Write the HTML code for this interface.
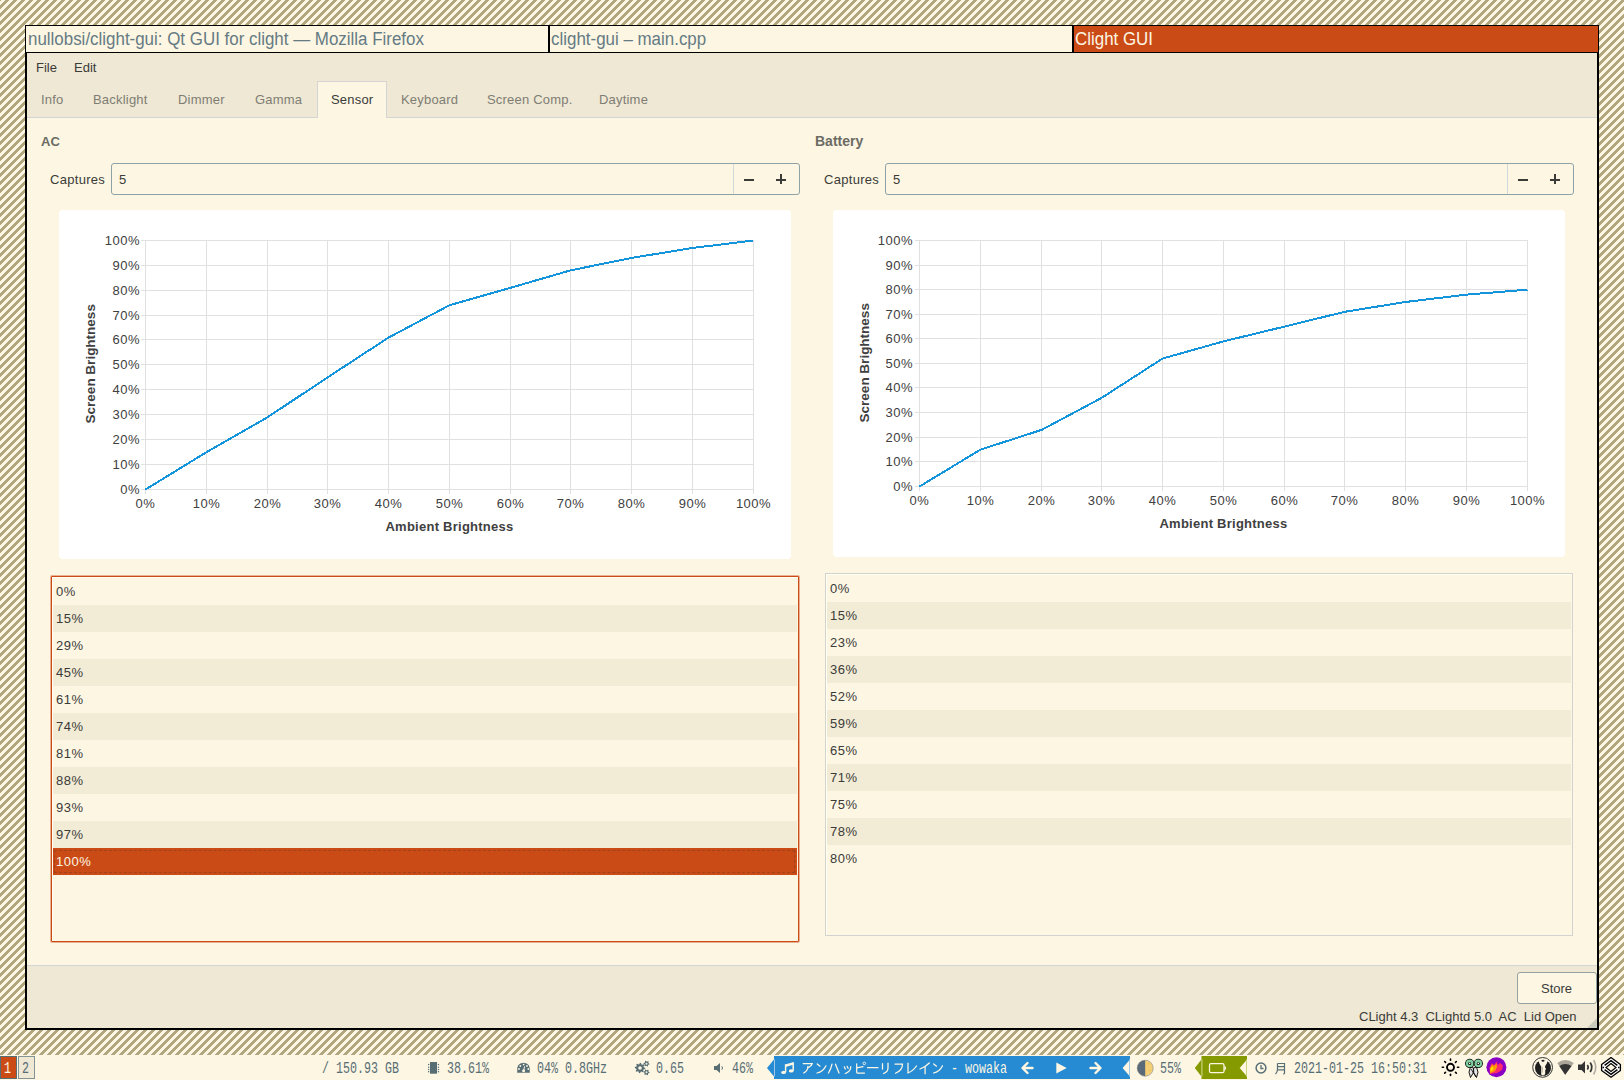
<!DOCTYPE html>
<html><head><meta charset="utf-8">
<style>
*{margin:0;padding:0;box-sizing:border-box}
html,body{width:1624px;height:1080px;overflow:hidden;background:#fdf6e3;font-family:"Liberation Sans",sans-serif}
.a{position:absolute}
.t{position:absolute;white-space:pre;line-height:1}
</style></head><body>
<svg class="a" style="left:0;top:0" width="1624" height="1080" shape-rendering="crispEdges">
<defs><pattern id="st" patternUnits="userSpaceOnUse" x="0" y="0" width="8" height="8">
<rect width="8" height="8" fill="#fdf6e3"/>
<path fill="#b1a67e" d="M0 0h1v1H0zM5 0h3v1H5zM4 1h4v1H4zM3 2h4v1H3zM2 3h4v1H2zM1 4h4v1H1zM0 5h4v1H0zM0 6h3v1H0zM7 6h1v1H7zM0 7h2v1H0zM6 7h2v1H6z"/>
</pattern></defs>
<rect width="1624" height="1055" fill="url(#st)"/>
</svg>

<!-- title bar -->
<div class="a" style="left:25px;top:25px;width:1574px;height:28px;background:#000"></div>
<div class="a" style="left:26px;top:26px;width:522px;height:26px;background:#fdf6e3"></div>
<div class="a" style="left:550px;top:26px;width:522px;height:26px;background:#fdf6e3"></div>
<div class="a" style="left:1074px;top:26px;width:524px;height:26px;background:#cb4b16"></div>
<div class="t" style="left:28px;top:30px;font-size:18px;color:#657b83;transform:scaleX(0.94);transform-origin:0 0">nullobsi/clight-gui: Qt GUI for clight — Mozilla Firefox</div>
<div class="t" style="left:551px;top:30px;font-size:18px;color:#657b83;transform:scaleX(0.94);transform-origin:0 0">clight-gui – main.cpp</div>
<div class="t" style="left:1075px;top:30px;font-size:18px;color:#fdf6e3;transform:scaleX(0.94);transform-origin:0 0">Clight GUI</div>

<!-- window -->
<div class="a" style="left:25px;top:53px;width:1574px;height:977px;background:#000"></div>
<div class="a" style="left:27px;top:53px;width:1570px;height:975px;background:#fdf6e3"></div>
<div class="a" style="left:27px;top:53px;width:1570px;height:64px;background:#eee8d5"></div>
<div class="a" style="left:27px;top:117px;width:1570px;height:1px;background:#d2d5d3"></div>
<div class="t" style="left:36px;top:61px;font-size:13px;color:#3b3b38">File</div>
<div class="t" style="left:74px;top:61px;font-size:13px;color:#3b3b38">Edit</div>

<!-- tabs -->
<div class="a" style="left:317px;top:81px;width:70px;height:37px;background:#fdf6e3;border:1px solid #d2d5d3;border-bottom:none"></div>
<div class="t" style="left:41px;top:93px;font-size:13px;letter-spacing:0.2px;color:#7f7d73">Info</div>
<div class="t" style="left:93px;top:93px;font-size:13px;letter-spacing:0.2px;color:#7f7d73">Backlight</div>
<div class="t" style="left:178px;top:93px;font-size:13px;letter-spacing:0.2px;color:#7f7d73">Dimmer</div>
<div class="t" style="left:255px;top:93px;font-size:13px;letter-spacing:0.2px;color:#7f7d73">Gamma</div>
<div class="t" style="left:331px;top:93px;font-size:13px;letter-spacing:0.2px;color:#3b3b38">Sensor</div>
<div class="t" style="left:401px;top:93px;font-size:13px;letter-spacing:0.2px;color:#7f7d73">Keyboard</div>
<div class="t" style="left:487px;top:93px;font-size:13px;letter-spacing:0.2px;color:#7f7d73">Screen Comp.</div>
<div class="t" style="left:599px;top:93px;font-size:13px;letter-spacing:0.2px;color:#7f7d73">Daytime</div>

<!-- bottom panel -->
<div class="a" style="left:27px;top:965px;width:1570px;height:1px;background:#d2d5d3"></div>
<div class="a" style="left:27px;top:966px;width:1570px;height:62px;background:#eee8d5"></div>
<div class="a" style="left:1517px;top:972px;width:80px;height:32px;background:#fdf6e3;border:1px solid #93a1a1;border-radius:3px"></div>
<div class="t" style="left:1541px;top:982px;font-size:13px;color:#3b3b38">Store</div>
<div class="t" style="left:1359px;top:1010px;font-size:13px;color:#3b3b38">CLight 4.3  CLightd 5.0  AC  Lid Open</div>

<svg class="a" style="left:1580px;top:1010px" width="17" height="18"><path id="grip" d="M17 8V18H7Z" fill="#c9cabb"/></svg>
<!-- PANELS -->
<div class="t" style="left:41px;top:135px;font-size:13px;font-weight:bold;color:#6b6b63">AC</div>
<div class="t" style="left:815px;top:134px;font-size:14px;font-weight:bold;color:#6b6b63">Battery</div>
<div class="t" style="left:50px;top:173px;font-size:13px;letter-spacing:0.3px;color:#3b3b38">Captures</div>
<div class="t" style="left:824px;top:173px;font-size:13px;letter-spacing:0.3px;color:#3b3b38">Captures</div>
<div class="a" style="left:111px;top:163px;width:689px;height:32px;border:1px solid #8fa3a6;border-radius:3px;background:#fdf6e3"></div>
<div class="a" style="left:733px;top:164px;width:1px;height:30px;background:#d0d8dc"></div>
<div class="t" style="left:119px;top:173px;font-size:13px;color:#3b3b38">5</div>
<div class="a" style="left:744px;top:179px;width:10px;height:1.6px;background:#3b3b38"></div>
<div class="a" style="left:776px;top:179px;width:10px;height:1.6px;background:#3b3b38"></div>
<div class="a" style="left:780px;top:174px;width:1.6px;height:10px;background:#3b3b38"></div>
<div class="a" style="left:885px;top:163px;width:689px;height:32px;border:1px solid #8fa3a6;border-radius:3px;background:#fdf6e3"></div>
<div class="a" style="left:1507px;top:164px;width:1px;height:30px;background:#d0d8dc"></div>
<div class="t" style="left:893px;top:173px;font-size:13px;color:#3b3b38">5</div>
<div class="a" style="left:1518px;top:179px;width:10px;height:1.6px;background:#3b3b38"></div>
<div class="a" style="left:1550px;top:179px;width:10px;height:1.6px;background:#3b3b38"></div>
<div class="a" style="left:1554px;top:174px;width:1.6px;height:10px;background:#3b3b38"></div>
<div class="a" style="left:59px;top:210px;width:732px;height:349px;background:#fff;border-radius:4px"></div>
<svg class="a" style="left:0;top:0" width="1624" height="1080">
<path d="M145.5 240V494M141 489.5H754M206.5 240V494M141 464.5H754M267.5 240V494M141 439.5H754M327.5 240V494M141 414.5H754M388.5 240V494M141 389.5H754M449.5 240V494M141 364.5H754M510.5 240V494M141 339.5H754M570.5 240V494M141 315.5H754M631.5 240V494M141 290.5H754M692.5 240V494M141 265.5H754M753.5 240V494M141 240.5H754" stroke="#e0e0e0" stroke-width="1" fill="none" shape-rendering="crispEdges"/>
<polyline points="145.50,489.50 206.50,452.15 267.50,417.29 327.50,377.45 388.50,337.61 449.50,305.24 510.50,287.81 570.50,270.38 631.50,257.93 692.50,247.97 753.50,240.50" fill="none" stroke="#1494da" stroke-width="2" stroke-linejoin="round" shape-rendering="crispEdges"/>
</svg>
<div class="t" style="left:80px;width:60px;text-align:right;top:483px;font-size:13px;letter-spacing:0.5px;color:#404040">0%</div>
<div class="t" style="left:115px;width:61px;text-align:center;top:497px;font-size:13px;letter-spacing:0.5px;color:#404040">0%</div>
<div class="t" style="left:80px;width:60px;text-align:right;top:458px;font-size:13px;letter-spacing:0.5px;color:#404040">10%</div>
<div class="t" style="left:176px;width:61px;text-align:center;top:497px;font-size:13px;letter-spacing:0.5px;color:#404040">10%</div>
<div class="t" style="left:80px;width:60px;text-align:right;top:433px;font-size:13px;letter-spacing:0.5px;color:#404040">20%</div>
<div class="t" style="left:237px;width:61px;text-align:center;top:497px;font-size:13px;letter-spacing:0.5px;color:#404040">20%</div>
<div class="t" style="left:80px;width:60px;text-align:right;top:408px;font-size:13px;letter-spacing:0.5px;color:#404040">30%</div>
<div class="t" style="left:297px;width:61px;text-align:center;top:497px;font-size:13px;letter-spacing:0.5px;color:#404040">30%</div>
<div class="t" style="left:80px;width:60px;text-align:right;top:383px;font-size:13px;letter-spacing:0.5px;color:#404040">40%</div>
<div class="t" style="left:358px;width:61px;text-align:center;top:497px;font-size:13px;letter-spacing:0.5px;color:#404040">40%</div>
<div class="t" style="left:80px;width:60px;text-align:right;top:358px;font-size:13px;letter-spacing:0.5px;color:#404040">50%</div>
<div class="t" style="left:419px;width:61px;text-align:center;top:497px;font-size:13px;letter-spacing:0.5px;color:#404040">50%</div>
<div class="t" style="left:80px;width:60px;text-align:right;top:333px;font-size:13px;letter-spacing:0.5px;color:#404040">60%</div>
<div class="t" style="left:480px;width:61px;text-align:center;top:497px;font-size:13px;letter-spacing:0.5px;color:#404040">60%</div>
<div class="t" style="left:80px;width:60px;text-align:right;top:309px;font-size:13px;letter-spacing:0.5px;color:#404040">70%</div>
<div class="t" style="left:540px;width:61px;text-align:center;top:497px;font-size:13px;letter-spacing:0.5px;color:#404040">70%</div>
<div class="t" style="left:80px;width:60px;text-align:right;top:284px;font-size:13px;letter-spacing:0.5px;color:#404040">80%</div>
<div class="t" style="left:601px;width:61px;text-align:center;top:497px;font-size:13px;letter-spacing:0.5px;color:#404040">80%</div>
<div class="t" style="left:80px;width:60px;text-align:right;top:259px;font-size:13px;letter-spacing:0.5px;color:#404040">90%</div>
<div class="t" style="left:662px;width:61px;text-align:center;top:497px;font-size:13px;letter-spacing:0.5px;color:#404040">90%</div>
<div class="t" style="left:80px;width:60px;text-align:right;top:234px;font-size:13px;letter-spacing:0.5px;color:#404040">100%</div>
<div class="t" style="left:723px;width:61px;text-align:center;top:497px;font-size:13px;letter-spacing:0.5px;color:#404040">100%</div>
<div class="t" style="left:349.0px;width:201px;text-align:center;top:520px;font-size:13px;font-weight:bold;letter-spacing:0.25px;color:#404040">Ambient Brightness</div>
<div class="t" style="left:-9px;width:200px;text-align:center;top:357.0px;font-size:13.5px;font-weight:bold;color:#404040;transform:rotate(-90deg)">Screen Brightness</div>
<div class="a" style="left:833px;top:210px;width:732px;height:347px;background:#fff;border-radius:4px"></div>
<svg class="a" style="left:0;top:0" width="1624" height="1080">
<path d="M919.5 240V491M915 486.5H1528M980.5 240V491M915 461.5H1528M1041.5 240V491M915 437.5H1528M1101.5 240V491M915 412.5H1528M1162.5 240V491M915 387.5H1528M1223.5 240V491M915 363.5H1528M1284.5 240V491M915 338.5H1528M1344.5 240V491M915 314.5H1528M1405.5 240V491M915 289.5H1528M1466.5 240V491M915 265.5H1528M1527.5 240V491M915 240.5H1528" stroke="#e0e0e0" stroke-width="1" fill="none" shape-rendering="crispEdges"/>
<polyline points="919.50,486.50 980.50,449.60 1041.50,429.92 1101.50,397.94 1162.50,358.58 1223.50,341.36 1284.50,326.60 1344.50,311.84 1405.50,302.00 1466.50,294.62 1527.50,289.70" fill="none" stroke="#1494da" stroke-width="2" stroke-linejoin="round" shape-rendering="crispEdges"/>
</svg>
<div class="t" style="left:853px;width:60px;text-align:right;top:480px;font-size:13px;letter-spacing:0.5px;color:#404040">0%</div>
<div class="t" style="left:889px;width:61px;text-align:center;top:494px;font-size:13px;letter-spacing:0.5px;color:#404040">0%</div>
<div class="t" style="left:853px;width:60px;text-align:right;top:455px;font-size:13px;letter-spacing:0.5px;color:#404040">10%</div>
<div class="t" style="left:950px;width:61px;text-align:center;top:494px;font-size:13px;letter-spacing:0.5px;color:#404040">10%</div>
<div class="t" style="left:853px;width:60px;text-align:right;top:431px;font-size:13px;letter-spacing:0.5px;color:#404040">20%</div>
<div class="t" style="left:1011px;width:61px;text-align:center;top:494px;font-size:13px;letter-spacing:0.5px;color:#404040">20%</div>
<div class="t" style="left:853px;width:60px;text-align:right;top:406px;font-size:13px;letter-spacing:0.5px;color:#404040">30%</div>
<div class="t" style="left:1071px;width:61px;text-align:center;top:494px;font-size:13px;letter-spacing:0.5px;color:#404040">30%</div>
<div class="t" style="left:853px;width:60px;text-align:right;top:381px;font-size:13px;letter-spacing:0.5px;color:#404040">40%</div>
<div class="t" style="left:1132px;width:61px;text-align:center;top:494px;font-size:13px;letter-spacing:0.5px;color:#404040">40%</div>
<div class="t" style="left:853px;width:60px;text-align:right;top:357px;font-size:13px;letter-spacing:0.5px;color:#404040">50%</div>
<div class="t" style="left:1193px;width:61px;text-align:center;top:494px;font-size:13px;letter-spacing:0.5px;color:#404040">50%</div>
<div class="t" style="left:853px;width:60px;text-align:right;top:332px;font-size:13px;letter-spacing:0.5px;color:#404040">60%</div>
<div class="t" style="left:1254px;width:61px;text-align:center;top:494px;font-size:13px;letter-spacing:0.5px;color:#404040">60%</div>
<div class="t" style="left:853px;width:60px;text-align:right;top:308px;font-size:13px;letter-spacing:0.5px;color:#404040">70%</div>
<div class="t" style="left:1314px;width:61px;text-align:center;top:494px;font-size:13px;letter-spacing:0.5px;color:#404040">70%</div>
<div class="t" style="left:853px;width:60px;text-align:right;top:283px;font-size:13px;letter-spacing:0.5px;color:#404040">80%</div>
<div class="t" style="left:1375px;width:61px;text-align:center;top:494px;font-size:13px;letter-spacing:0.5px;color:#404040">80%</div>
<div class="t" style="left:853px;width:60px;text-align:right;top:259px;font-size:13px;letter-spacing:0.5px;color:#404040">90%</div>
<div class="t" style="left:1436px;width:61px;text-align:center;top:494px;font-size:13px;letter-spacing:0.5px;color:#404040">90%</div>
<div class="t" style="left:853px;width:60px;text-align:right;top:234px;font-size:13px;letter-spacing:0.5px;color:#404040">100%</div>
<div class="t" style="left:1497px;width:61px;text-align:center;top:494px;font-size:13px;letter-spacing:0.5px;color:#404040">100%</div>
<div class="t" style="left:1123.0px;width:201px;text-align:center;top:517px;font-size:13px;font-weight:bold;letter-spacing:0.25px;color:#404040">Ambient Brightness</div>
<div class="t" style="left:765px;width:200px;text-align:center;top:355.5px;font-size:13.5px;font-weight:bold;color:#404040;transform:rotate(-90deg)">Screen Brightness</div>
<div class="a" style="left:51px;top:576px;width:748px;height:366px;border:1px solid #cb4b16;background:#fdf6e3;box-shadow:0 0 0 1px rgba(203,75,22,0.4);border-radius:1px"></div>
<div class="a" style="left:52px;top:577px;width:746px;height:1px;background:#fffff2"></div>
<div class="a" style="left:52px;top:577px;width:1px;height:364px;background:#fffff2"></div>
<div class="t" style="left:56px;top:585px;font-size:13px;letter-spacing:0.5px;color:#3b3b38">0%</div>
<div class="a" style="left:53px;top:605px;width:744px;height:27px;background:#f2ebd6"></div>
<div class="t" style="left:56px;top:612px;font-size:13px;letter-spacing:0.5px;color:#3b3b38">15%</div>
<div class="t" style="left:56px;top:639px;font-size:13px;letter-spacing:0.5px;color:#3b3b38">29%</div>
<div class="a" style="left:53px;top:659px;width:744px;height:27px;background:#f2ebd6"></div>
<div class="t" style="left:56px;top:666px;font-size:13px;letter-spacing:0.5px;color:#3b3b38">45%</div>
<div class="t" style="left:56px;top:693px;font-size:13px;letter-spacing:0.5px;color:#3b3b38">61%</div>
<div class="a" style="left:53px;top:713px;width:744px;height:27px;background:#f2ebd6"></div>
<div class="t" style="left:56px;top:720px;font-size:13px;letter-spacing:0.5px;color:#3b3b38">74%</div>
<div class="t" style="left:56px;top:747px;font-size:13px;letter-spacing:0.5px;color:#3b3b38">81%</div>
<div class="a" style="left:53px;top:767px;width:744px;height:27px;background:#f2ebd6"></div>
<div class="t" style="left:56px;top:774px;font-size:13px;letter-spacing:0.5px;color:#3b3b38">88%</div>
<div class="t" style="left:56px;top:801px;font-size:13px;letter-spacing:0.5px;color:#3b3b38">93%</div>
<div class="a" style="left:53px;top:821px;width:744px;height:27px;background:#f2ebd6"></div>
<div class="t" style="left:56px;top:828px;font-size:13px;letter-spacing:0.5px;color:#3b3b38">97%</div>
<div class="a" style="left:53px;top:848px;width:744px;height:27px;background:#cb4b16"></div>
<div class="a" style="left:54px;top:850px;width:741px;height:23px;border:1px dashed #a0431a"></div>
<div class="t" style="left:56px;top:855px;font-size:13px;letter-spacing:0.5px;color:#fdf6e3">100%</div>
<div class="a" style="left:825px;top:573px;width:748px;height:363px;border:1px solid #d2d3cf;background:#fdf6e3"></div>
<div class="a" style="left:826px;top:574px;width:746px;height:1px;background:#fffff2"></div>
<div class="a" style="left:826px;top:574px;width:1px;height:361px;background:#fffff2"></div>
<div class="t" style="left:830px;top:582px;font-size:13px;letter-spacing:0.5px;color:#3b3b38">0%</div>
<div class="a" style="left:827px;top:602px;width:744px;height:27px;background:#f2ebd6"></div>
<div class="t" style="left:830px;top:609px;font-size:13px;letter-spacing:0.5px;color:#3b3b38">15%</div>
<div class="t" style="left:830px;top:636px;font-size:13px;letter-spacing:0.5px;color:#3b3b38">23%</div>
<div class="a" style="left:827px;top:656px;width:744px;height:27px;background:#f2ebd6"></div>
<div class="t" style="left:830px;top:663px;font-size:13px;letter-spacing:0.5px;color:#3b3b38">36%</div>
<div class="t" style="left:830px;top:690px;font-size:13px;letter-spacing:0.5px;color:#3b3b38">52%</div>
<div class="a" style="left:827px;top:710px;width:744px;height:27px;background:#f2ebd6"></div>
<div class="t" style="left:830px;top:717px;font-size:13px;letter-spacing:0.5px;color:#3b3b38">59%</div>
<div class="t" style="left:830px;top:744px;font-size:13px;letter-spacing:0.5px;color:#3b3b38">65%</div>
<div class="a" style="left:827px;top:764px;width:744px;height:27px;background:#f2ebd6"></div>
<div class="t" style="left:830px;top:771px;font-size:13px;letter-spacing:0.5px;color:#3b3b38">71%</div>
<div class="t" style="left:830px;top:798px;font-size:13px;letter-spacing:0.5px;color:#3b3b38">75%</div>
<div class="a" style="left:827px;top:818px;width:744px;height:27px;background:#f2ebd6"></div>
<div class="t" style="left:830px;top:825px;font-size:13px;letter-spacing:0.5px;color:#3b3b38">78%</div>
<div class="t" style="left:830px;top:852px;font-size:13px;letter-spacing:0.5px;color:#3b3b38">80%</div>
<!-- STATUSBAR -->
<div class="a" style="left:0;top:1056px;width:17px;height:23px;background:#cb4b16;border:1px solid #586e75"></div>
<div class="a" style="left:18px;top:1056px;width:17px;height:23px;background:#eee8d5;border:1px solid #839496"></div>
<div class="t" style="left:4px;top:1061px;font-family:'Liberation Mono',monospace;font-size:16.5px;color:#fdf6e3;transform:scaleX(0.7071);transform-origin:0 0">1</div>
<div class="t" style="left:22px;top:1061px;font-family:'Liberation Mono',monospace;font-size:16.5px;color:#586e75;transform:scaleX(0.7071);transform-origin:0 0">2</div>
<div class="t" style="left:322px;top:1061px;font-family:'Liberation Mono',monospace;font-size:16.5px;color:#586e75;transform:scaleX(0.7071);transform-origin:0 0">/ 150.93 GB</div>
<div class="t" style="left:447px;top:1061px;font-family:'Liberation Mono',monospace;font-size:16.5px;color:#586e75;transform:scaleX(0.7071);transform-origin:0 0">38.61%</div>
<div class="t" style="left:537px;top:1061px;font-family:'Liberation Mono',monospace;font-size:16.5px;color:#586e75;transform:scaleX(0.7071);transform-origin:0 0">04% 0.8GHz</div>
<div class="t" style="left:656px;top:1061px;font-family:'Liberation Mono',monospace;font-size:16.5px;color:#586e75;transform:scaleX(0.7071);transform-origin:0 0">0.65</div>
<div class="t" style="left:732px;top:1061px;font-family:'Liberation Mono',monospace;font-size:16.5px;color:#586e75;transform:scaleX(0.7071);transform-origin:0 0">46%</div>
<div class="t" style="left:1160px;top:1061px;font-family:'Liberation Mono',monospace;font-size:16.5px;color:#586e75;transform:scaleX(0.7071);transform-origin:0 0">55%</div>
<div class="t" style="left:1294px;top:1061px;font-family:'Liberation Mono',monospace;font-size:16.5px;color:#586e75;transform:scaleX(0.7071);transform-origin:0 0">2021-01-25 16:50:31</div>
<svg class="a" style="left:0;top:0" width="1624" height="1080">
<path d="M767 1068L774 1059.5V1076.5Z" fill="#268bd2"/>
<rect x="774" y="1056" width="356" height="23" fill="#268bd2"/>
<path d="M1130 1059.5L1122.6 1068L1130 1076.5Z" fill="#fdf6e3"/>
<path d="M1129.5 1059.5V1076.5" stroke="#9ec8e8" stroke-width="1"/>
<path d="M774.5 1059.5V1076.5" stroke="#9ec8e8" stroke-width="1"/>
<path d="M1194.8 1068L1201.5 1059.5V1076.5Z" fill="#859900"/>
<rect x="1201.5" y="1056" width="45.5" height="23" fill="#859900"/>
<path d="M1247 1059.5L1239.7 1068L1247 1076.5Z" fill="#fdf6e3"/>
<path d="M1202 1059.5V1076.5M1246.5 1059.5V1076.5" stroke="#c8d27a" stroke-width="1"/>
<rect x="1209.5" y="1063.7" width="14.5" height="9" rx="1.5" fill="none" stroke="#fdf6e3" stroke-width="1.3"/>
<path d="M1224.5 1066.5Q1226.2 1068.2 1224.5 1070" fill="none" stroke="#fdf6e3" stroke-width="1.3"/>
<path d="M785.6 1064.3L793.2 1062.2V1064.8L785.6 1066.9Z" fill="#fdf6e3"/>
<path d="M785.6 1064.3V1072.3M793.2 1062.2V1070.8" fill="none" stroke="#fdf6e3" stroke-width="1.5"/>
<ellipse cx="783.6" cy="1072.4" rx="2.4" ry="1.7" fill="#fdf6e3"/>
<ellipse cx="791.2" cy="1070.9" rx="2.4" ry="1.7" fill="#fdf6e3"/>
<path transform="translate(802.7 1062)" d="M0.5 1.5H9.6Q8.8 4 6 5.5M5.2 4.3Q5.2 9 1 11" fill="none" stroke="#fdf6e3" stroke-width="1.25" stroke-linecap="round"/>
<path transform="translate(816 1062)" d="M1.2 2L4 4.2M1 11Q7 10 10 3.8" fill="none" stroke="#fdf6e3" stroke-width="1.25" stroke-linecap="round"/>
<path transform="translate(828 1062)" d="M4 2.2Q3 7 0.5 11M7.5 2.2Q9.5 7 11 11" fill="none" stroke="#fdf6e3" stroke-width="1.25" stroke-linecap="round"/>
<path transform="translate(843.3 1062)" d="M1 4.8L2 7M3.8 4.3L4.8 6.3M7.5 4.5Q7.5 9.5 2 11.5" fill="none" stroke="#fdf6e3" stroke-width="1.25" stroke-linecap="round"/>
<path transform="translate(855.5 1062)" d="M1.2 1.8V10.3Q1.2 11 2 11H9M1.2 5.8L7.5 4.6" fill="none" stroke="#fdf6e3" stroke-width="1.25" stroke-linecap="round"/>
<path transform="translate(867.5 1062)" d="M0 5.7H10.5" fill="none" stroke="#fdf6e3" stroke-width="1.25" stroke-linecap="round"/>
<path transform="translate(881 1062)" d="M1.5 1.5V7M7 1V6Q7 10 2.5 11.5" fill="none" stroke="#fdf6e3" stroke-width="1.25" stroke-linecap="round"/>
<path transform="translate(894.5 1062)" d="M0.5 2H8Q8.2 8 1 11.3" fill="none" stroke="#fdf6e3" stroke-width="1.25" stroke-linecap="round"/>
<path transform="translate(907 1062)" d="M1 1.2V10.8Q5.5 9.5 9.5 4" fill="none" stroke="#fdf6e3" stroke-width="1.25" stroke-linecap="round"/>
<path transform="translate(919.5 1062)" d="M9.8 1Q6 5 0.5 7M5.6 4.3V11.8" fill="none" stroke="#fdf6e3" stroke-width="1.25" stroke-linecap="round"/>
<path transform="translate(932.5 1062)" d="M1.2 2L4 4.2M1 11Q7 10 10 3.8" fill="none" stroke="#fdf6e3" stroke-width="1.25" stroke-linecap="round"/>
<circle cx="864.3" cy="1063.4" r="1.3" fill="none" stroke="#fdf6e3" stroke-width="0.9"/>
<path d="M1032.5 1068H1023M1027.5 1063L1022.5 1068L1027.5 1073" fill="none" stroke="#fdf6e3" stroke-width="2.4" stroke-linecap="round" stroke-linejoin="round"/>
<path d="M1056.3 1062.5L1066.7 1068L1056.3 1073.5Z" fill="#fdf6e3"/>
<path d="M1090.5 1068H1100M1095.5 1063L1100.5 1068L1095.5 1073" fill="none" stroke="#fdf6e3" stroke-width="2.4" stroke-linecap="round" stroke-linejoin="round"/>
<rect x="430" y="1062" width="7" height="11.7" fill="#586e75"/>
<rect x="428" y="1063.9" width="1.3" height="1.2" fill="#586e75"/><rect x="437.8" y="1063.9" width="1.3" height="1.2" fill="#586e75"/>
<rect x="428" y="1066.6000000000001" width="1.3" height="1.2" fill="#586e75"/><rect x="437.8" y="1066.6000000000001" width="1.3" height="1.2" fill="#586e75"/>
<rect x="428" y="1068.9" width="1.3" height="1.2" fill="#586e75"/><rect x="437.8" y="1068.9" width="1.3" height="1.2" fill="#586e75"/>
<rect x="428" y="1071.1000000000001" width="1.3" height="1.2" fill="#586e75"/><rect x="437.8" y="1071.1000000000001" width="1.3" height="1.2" fill="#586e75"/>
<path d="M517.2 1072.7Q516 1062.7 523.5 1062.7Q531 1062.7 529.8 1072.7Z" fill="#586e75"/>
<circle cx="523.6" cy="1070.7" r="1.5" fill="#fdf6e3"/><path d="M523.6 1070.5L524.7 1066.3" stroke="#fdf6e3" stroke-width="1"/>
<circle cx="523.6" cy="1064.6" r="0.9" fill="#fdf6e3"/>
<circle cx="520.3" cy="1066" r="0.9" fill="#fdf6e3"/>
<circle cx="527" cy="1066" r="0.9" fill="#fdf6e3"/>
<circle cx="519" cy="1069" r="0.9" fill="#fdf6e3"/>
<circle cx="528.3" cy="1069" r="0.9" fill="#fdf6e3"/>
<polygon points="645.20,1068.00 645.10,1069.01 643.51,1069.45 643.16,1070.11 643.68,1071.68 642.89,1072.32 641.45,1071.51 640.74,1071.73 640.00,1073.20 638.99,1073.10 638.55,1071.51 637.89,1071.16 636.32,1071.68 635.68,1070.89 636.49,1069.45 636.27,1068.74 634.80,1068.00 634.90,1066.99 636.49,1066.55 636.84,1065.89 636.32,1064.32 637.11,1063.68 638.55,1064.49 639.26,1064.27 640.00,1062.80 641.01,1062.90 641.45,1064.49 642.11,1064.84 643.68,1064.32 644.32,1065.11 643.51,1066.55 643.73,1067.26" fill="#586e75"/>
<circle cx="640" cy="1068" r="1.8" fill="#fdf6e3"/>
<polygon points="649.50,1063.70 649.40,1064.48 648.32,1064.75 647.98,1065.18 648.00,1066.30 647.28,1066.60 646.50,1065.80 645.96,1065.73 645.00,1066.30 644.38,1065.82 644.68,1064.75 644.47,1064.24 643.50,1063.70 643.60,1062.92 644.68,1062.65 645.02,1062.22 645.00,1061.10 645.72,1060.80 646.50,1061.60 647.04,1061.67 648.00,1061.10 648.62,1061.58 648.32,1062.65 648.53,1063.16" fill="#586e75"/>
<circle cx="646.5" cy="1063.7" r="1" fill="#fdf6e3"/>
<polygon points="649.50,1072.30 649.40,1073.08 648.32,1073.35 647.98,1073.78 648.00,1074.90 647.28,1075.20 646.50,1074.40 645.96,1074.33 645.00,1074.90 644.38,1074.42 644.68,1073.35 644.47,1072.84 643.50,1072.30 643.60,1071.52 644.68,1071.25 645.02,1070.82 645.00,1069.70 645.72,1069.40 646.50,1070.20 647.04,1070.27 648.00,1069.70 648.62,1070.18 648.32,1071.25 648.53,1071.76" fill="#586e75"/>
<circle cx="646.5" cy="1072.3" r="1" fill="#fdf6e3"/>
<path d="M714 1066H716.5L720 1063V1073L716.5 1070H714Z" fill="#586e75"/>
<path d="M721.8 1066.3Q723.3 1068 721.8 1069.7" fill="none" stroke="#586e75" stroke-width="1"/>
<circle cx="1145.2" cy="1068.2" r="8" fill="#f5cf75"/>
<path d="M1145.2 1060.2A8 8 0 0 0 1145.2 1076.2Z" fill="#5a6a78"/>
<circle cx="1145.2" cy="1068.2" r="8" fill="none" stroke="#7d8790" stroke-width="0.6"/>
<circle cx="1148.5" cy="1064" r="0.8" fill="#e8b850"/><circle cx="1149.5" cy="1070.5" r="0.7" fill="#e8b850"/>
<circle cx="1261" cy="1068" r="4.9" fill="none" stroke="#586e75" stroke-width="1.5"/>
<path d="M1261 1065V1068.5H1263.5" fill="none" stroke="#586e75" stroke-width="1.3"/>
<path d="M1277.5 1063.5V1069Q1277.5 1072 1275.5 1074M1277.5 1063.5H1284.5V1073.5Q1284.5 1074 1283 1074M1277.5 1066.7H1284.5M1277.5 1069.8H1284.5" fill="none" stroke="#586e75" stroke-width="1.2"/>
<circle cx="1450.5" cy="1067.3" r="3.5" fill="none" stroke="#000" stroke-width="1.9"/>
<path d="M1457.50 1067.30L1458.70 1067.30" stroke="#000" stroke-width="1.6" stroke-linecap="round"/>
<path d="M1455.45 1072.25L1456.30 1073.10" stroke="#000" stroke-width="1.6" stroke-linecap="round"/>
<path d="M1450.50 1074.30L1450.50 1075.50" stroke="#000" stroke-width="1.6" stroke-linecap="round"/>
<path d="M1445.55 1072.25L1444.70 1073.10" stroke="#000" stroke-width="1.6" stroke-linecap="round"/>
<path d="M1443.50 1067.30L1442.30 1067.30" stroke="#000" stroke-width="1.6" stroke-linecap="round"/>
<path d="M1445.55 1062.35L1444.70 1061.50" stroke="#000" stroke-width="1.6" stroke-linecap="round"/>
<path d="M1450.50 1060.30L1450.50 1059.10" stroke="#000" stroke-width="1.6" stroke-linecap="round"/>
<path d="M1455.45 1062.35L1456.30 1061.50" stroke="#000" stroke-width="1.6" stroke-linecap="round"/>
<path d="M1470.5 1067Q1467.5 1072 1470.5 1077.5Q1474.5 1073 1473.5 1068Z" fill="#e4e4e4" stroke="#000" stroke-width="0.9"/>
<path d="M1476.5 1067Q1479.5 1072 1476.5 1077.5Q1472.5 1073 1473.5 1068Z" fill="#e4e4e4" stroke="#000" stroke-width="0.9"/>
<path d="M1471 1069L1476 1077" stroke="#000" stroke-width="0.8"/>
<circle cx="1469.7" cy="1063.4" r="4.6" fill="#000"/><circle cx="1469.7" cy="1063.4" r="3.8" fill="#7fcf9f"/><circle cx="1469.7" cy="1063.4" r="1.5" fill="#000"/><circle cx="1469.7" cy="1063.4" r="0.8" fill="#fff"/>
<circle cx="1478.3" cy="1063.4" r="4.6" fill="#000"/><circle cx="1478.3" cy="1063.4" r="3.8" fill="#7fcf9f"/><circle cx="1478.3" cy="1063.4" r="1.5" fill="#000"/><circle cx="1478.3" cy="1063.4" r="0.8" fill="#fff"/>
<circle cx="1496.4" cy="1067.3" r="10" fill="#8a00c4"/>
<path d="M1490 1074L1489.5 1068L1492 1063L1494 1065L1497 1061.5L1497.5 1065L1500 1063L1503 1065.5L1502 1070L1497 1073Z" fill="#ff2a6a"/>
<path d="M1490 1073.5L1490 1068L1492 1064.5L1494 1066L1496.5 1063.5L1497 1067L1495 1071Z" fill="#ff9900"/>
<path d="M1490.5 1072L1490.8 1068.5L1492.5 1066.5L1493.5 1069Z" fill="#ffe000"/>
<circle cx="1542.6" cy="1067.4" r="9.9" fill="none" stroke="#333" stroke-width="1"/>
<circle cx="1543" cy="1068" r="8" fill="#1f1f1f"/>
<path d="M1538 1059.6H1548L1546.8 1063.5L1545.2 1066L1545 1067.5L1546 1068.5L1545.2 1070.5V1074Q1543.5 1076.5 1541.2 1074.5V1066.5L1539.6 1064Z" fill="#fdf6e3"/>
<ellipse cx="1543" cy="1060.8" rx="1.6" ry="1" fill="#1f1f1f"/>
<path d="M1542.4 1067V1072.5" stroke="#b0aa98" stroke-width="0.8"/>
<path d="M1565.2 1074.7L1557.3 1063Q1565.2 1057 1573.8 1063Z" fill="#a9a699"/>
<path d="M1565.2 1074.7L1559.3 1066Q1565.2 1062 1571.5 1066Z" fill="#333"/>
<path d="M1578 1064.5H1581.5L1585 1061V1073.5L1581.5 1070H1578Z" fill="#333"/>
<path d="M1587.3 1065Q1589.2 1067.3 1587.3 1069.6" fill="none" stroke="#333" stroke-width="1.6"/>
<path d="M1590.2 1062.5Q1593.4 1067.3 1590.2 1072" fill="none" stroke="#333" stroke-width="1.7"/>
<path d="M1593.6 1060Q1598 1067.3 1593.6 1074.5" fill="none" stroke="#b0ada3" stroke-width="1.6"/>
<path d="M1611 1057.6L1620.4 1064.6V1070.4L1611 1077.3L1601.6 1070.4V1064.6Z" fill="#fff" stroke="#000" stroke-width="1.3" stroke-linejoin="round"/>
<path d="M1602.5 1067.5H1604M1618 1067.5H1619.5" stroke="#000" stroke-width="1.3"/>
<path d="M1604.6 1065.4L1611 1060.6L1617.4 1065.4M1604.6 1069.6L1611 1074.4L1617.4 1069.6" fill="none" stroke="#000" stroke-width="1.4"/>
<path d="M1611 1063.5L1616 1067.5L1611 1071.5L1606 1067.5Z" fill="#fdf6e3" stroke="#000" stroke-width="1.2"/>
</svg>
<div class="t" style="left:951px;top:1061px;font-family:'Liberation Mono',monospace;font-size:16.5px;color:#fdf6e3;transform:scaleX(0.7071);transform-origin:0 0">- wowaka</div>
</body></html>
